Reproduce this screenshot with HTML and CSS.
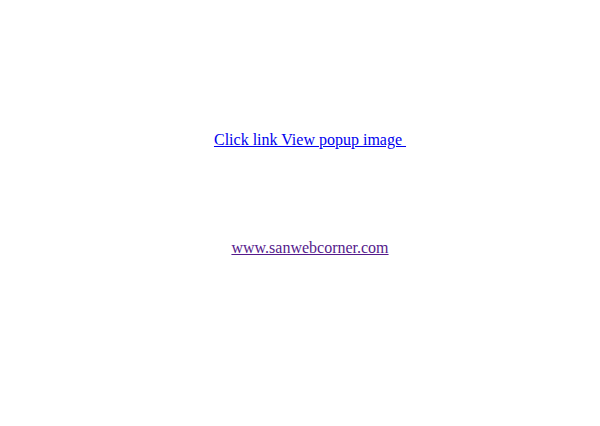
FILE: index.html
```
<!DOCTYPE html>
<html>
<head>
<meta charset="utf-8">
<link rel="stylesheet" href="styles.css">
</head>
<body>
<div class="page">
  <p class="row first"><a class="link" href="#popup">Click link View popup image </a></p>
  <p class="row second"><a class="link visited" href="#site">www.sanwebcorner.com</a></p>
</div>
</body>
</html>
```
FILE: styles.css
```
html, body {
  margin: 0;
  padding: 0;
  background: #ffffff;
}
.page {
  font-family: "Liberation Serif", "Times New Roman", serif;
  font-size: 16px;
  padding: 131px 0 0 20px;
  text-align: center;
}
.row {
  margin: 0;
  line-height: 18px;
}
.second {
  margin-top: 90px;
}
.link {
  color: #0000ee;
  text-decoration: underline;
  white-space: pre;
}
.visited {
  color: #551a8b;
}
```
